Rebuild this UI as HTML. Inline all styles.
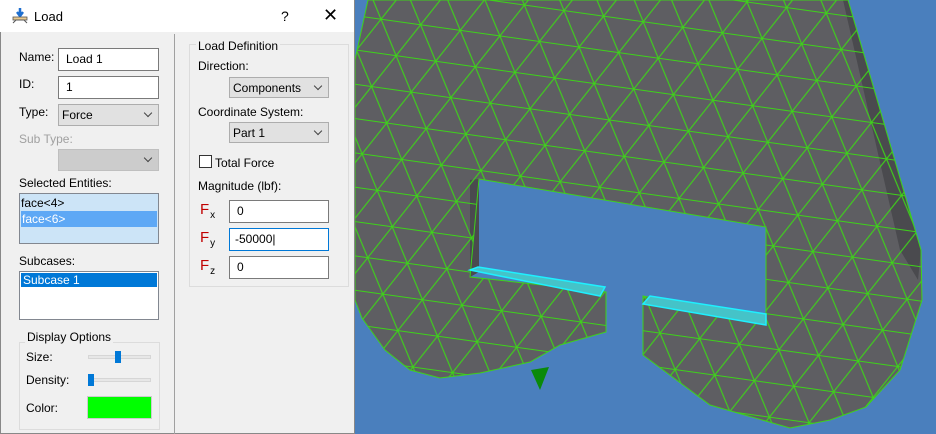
<!DOCTYPE html>
<html><head><style>
*{box-sizing:border-box}
body{margin:0;width:936px;height:434px;overflow:hidden;background:#4a7fbd;font-family:"Liberation Sans",sans-serif;font-size:12px;color:#000;position:relative}
.a{position:absolute}
.dlg{left:0;top:0;width:355px;height:434px;background:#f0f0f0;border:1px solid #888;border-top:none}
.title{left:0;top:0;width:354px;height:32px;background:#fff}
.in{position:absolute;background:#fff;border:1px solid #7a7a7a;padding:3px 0 0 7px}
.sel{position:absolute;background:#e1e1e1;border:1px solid #adadad;padding:3px 0 0 3px}
.sel:after{content:"";position:absolute;right:7px;top:5px;width:5px;height:5px;border-right:1px solid #444;border-bottom:1px solid #444;transform:rotate(45deg)}
.lbl{position:absolute}
.F{position:absolute;color:#c00000;font-size:15px}
.F sub{font-size:10px;color:#000;vertical-align:-4px;margin-left:1px}
</style></head><body>
<svg class="a" style="left:355px;top:0" width="581" height="434" viewBox="355 0 581 434">
<defs>
<pattern id="m" width="40" height="68" patternUnits="userSpaceOnUse" patternTransform="rotate(8)">
<path d="M-5 0H45M-5 34H45M-5 68H45M0 0L40 68M40 0L0 68" stroke="#3ed21a" stroke-width="1.1" fill="none"/>
</pattern>
<clipPath id="c"><path id="sh" d="M368 0H848L921 250L922 300L900 370L866 407L830 420L790 428L710 405L643 355L643 296L766 322L766 227L479 179L470 277L606 292L606 332L560 345L530 362L480 373L440 378L410 370L385 350L362 318L355 300L355 60Z"/></clipPath>
</defs>
<use href="#sh" fill="#5e5e62"/>
<path d="M848 0L921 250L918 280L900 250L843 0Z" fill="#4a4a4e"/>
<path d="M470 180L479 179L479 272L470 277Z" fill="#4a4a4e"/>
<g clip-path="url(#c)"><rect x="355" y="0" width="581" height="434" fill="url(#m)"/></g>
<use href="#sh" fill="none" stroke="#3ed21a" stroke-width="1"/>
<path d="M470 270L478 267L605 287L600 296Z" fill="#45c3c8" stroke="#1ef0ff" stroke-width="1.5"/>
<path d="M643 304L650 296L766 314L766 325Z" fill="#45c3c8" stroke="#1ef0ff" stroke-width="1.5"/>
<path d="M531 370L549 367L540 390Z" fill="#0a8a0a"/>
</svg>
<div class="a dlg"></div>
<div class="a title"></div>
<svg class="a" style="left:11px;top:7px" width="18" height="18" viewBox="0 0 18 18"><path d="M9 1V8M6 5L9 9L12 5" stroke="#1e6fd0" stroke-width="2.5" fill="none"/><rect x="2" y="10" width="14" height="3" fill="#e8c98e" stroke="#555" stroke-width=".8"/><path d="M2 16L5 13H13L16 16" stroke="#555" fill="none"/></svg>
<div class="lbl" style="left:34px;top:9px;font-size:13px">Load</div>
<div class="lbl" style="left:281px;top:8px;font-size:14px">?</div>
<div class="lbl" style="left:323px;top:5px;font-size:18px;font-weight:300">✕</div>
<div class="a" style="left:174px;top:34px;width:1px;height:400px;background:#a0a0a0"></div>

<div class="lbl" style="left:19px;top:50px">Name:</div>
<div class="in" style="left:58px;top:48px;width:101px;height:23px">Load 1</div>
<div class="lbl" style="left:19px;top:77px">ID:</div>
<div class="in" style="left:58px;top:76px;width:101px;height:23px">1</div>
<div class="lbl" style="left:19px;top:105px">Type:</div>
<div class="sel" style="left:58px;top:104px;width:101px;height:22px">Force</div>
<div class="lbl" style="left:19px;top:132px;color:#a0a0a0">Sub Type:</div>
<div class="sel" style="left:58px;top:149px;width:101px;height:22px;background:#ccc;border-color:#bfbfbf"></div>
<div class="lbl" style="left:19px;top:176px">Selected Entities:</div>
<div class="a" style="left:19px;top:193px;width:140px;height:51px;border:1px solid #828790;background:#cce4f7">
<div style="padding:2px 1px 0;height:17px">face&lt;4&gt;</div>
<div style="padding:1px 1px 0;height:16px;background:#5ea8f5;color:#fff;margin:0 1px">face&lt;6&gt;</div></div>
<div class="lbl" style="left:19px;top:254px">Subcases:</div>
<div class="a" style="left:19px;top:271px;width:140px;height:49px;border:1px solid #828790;background:#fff;padding:1px">
<div style="background:#0078d7;color:#fff;height:14px;padding-left:2px;line-height:14px">Subcase 1</div></div>
<div class="a" style="left:19px;top:342px;width:141px;height:88px;border:1px solid #dcdcdc"></div>
<div class="lbl" style="left:25px;top:330px;background:#f0f0f0;padding:0 2px">Display Options</div>
<div class="lbl" style="left:26px;top:350px">Size:</div>
<div class="a" style="left:88px;top:355px;width:63px;height:4px;background:#e7e7e7;border:1px solid #d6d6d6"></div>
<div class="a" style="left:115px;top:351px;width:6px;height:12px;background:#0078d7"></div>
<div class="lbl" style="left:26px;top:373px">Density:</div>
<div class="a" style="left:88px;top:378px;width:63px;height:4px;background:#e7e7e7;border:1px solid #d6d6d6"></div>
<div class="a" style="left:88px;top:374px;width:6px;height:12px;background:#0078d7"></div>
<div class="lbl" style="left:26px;top:401px">Color:</div>
<div class="a" style="left:87px;top:396px;width:65px;height:23px;background:#00ff00;border:1px solid #ccc"></div>

<div class="a" style="left:189px;top:44px;width:160px;height:243px;border:1px solid #dcdcdc"></div>
<div class="lbl" style="left:196px;top:39px;background:#f0f0f0;padding:0 2px">Load Definition</div>
<div class="lbl" style="left:198px;top:59px">Direction:</div>
<div class="sel" style="left:229px;top:77px;width:100px;height:21px">Components</div>
<div class="lbl" style="left:198px;top:105px">Coordinate System:</div>
<div class="sel" style="left:229px;top:122px;width:100px;height:21px">Part 1</div>
<div class="a" style="left:199px;top:155px;width:13px;height:13px;border:1px solid #333;background:#fff"></div>
<div class="lbl" style="left:215px;top:156px">Total Force</div>
<div class="lbl" style="left:198px;top:179px">Magnitude (lbf):</div>
<div class="F" style="left:200px;top:201px">F<sub>x</sub></div>
<div class="in" style="left:229px;top:200px;width:100px;height:23px">0</div>
<div class="F" style="left:200px;top:229px">F<sub>y</sub></div>
<div class="in" style="left:229px;top:228px;width:100px;height:23px;border-color:#0078d7;padding-left:5px">-50000|</div>
<div class="F" style="left:200px;top:257px">F<sub>z</sub></div>
<div class="in" style="left:229px;top:256px;width:100px;height:23px">0</div>
</body></html>
